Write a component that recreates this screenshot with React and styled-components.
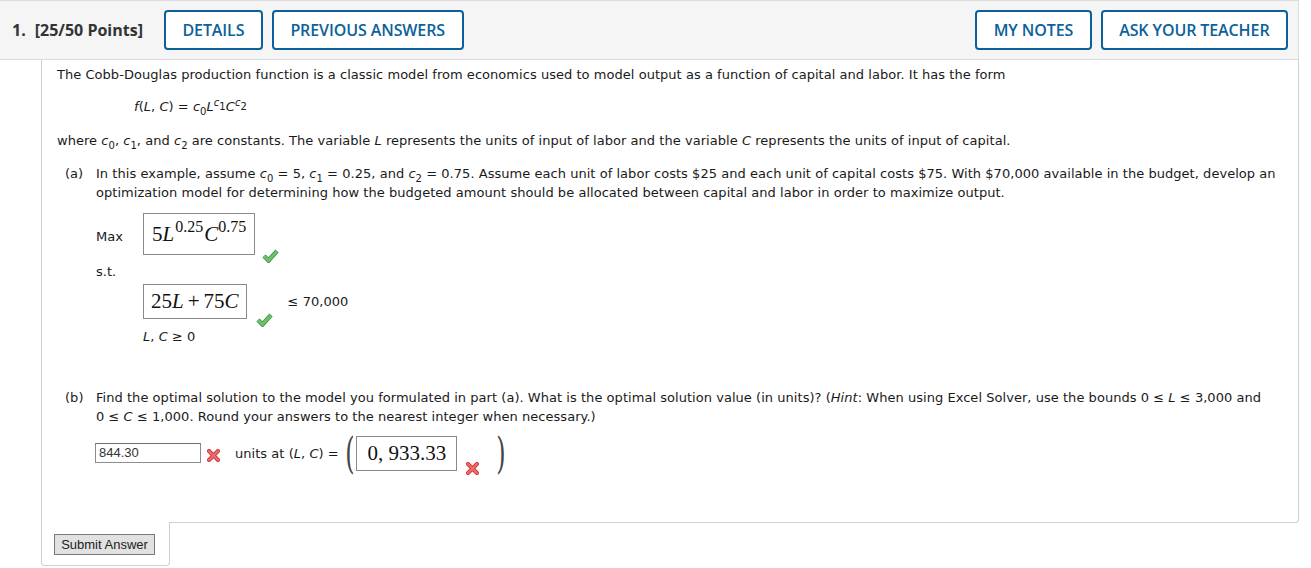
import React from "react";
import styled, { createGlobalStyle } from "styled-components";

const Global = createGlobalStyle`
  html, body { margin: 0; padding: 0; background: #fff; }
  body { width: 1311px; height: 568px; overflow: hidden; }
`;

const Page = styled.div`
  width: 1311px;
  font-family: "DejaVu Sans", Verdana, sans-serif;
  font-size: 13px;
  letter-spacing: 0.04px;
  color: #1a1a1a;
`;

const Header = styled.header`
  box-sizing: border-box;
  width: 1299px;
  height: 60px;
  background: #f5f5f5;
  border-top: 1px solid #dcdcdc;
  border-right: 1px solid #dcdcdc;
  border-bottom: 1px solid #dcdcdc;
  display: flex;
  align-items: center;
  padding: 0 10px 1px 12px;
  font-family: "Open Sans", sans-serif;
  letter-spacing: 0;
`;

const QNum = styled.span`
  font-weight: 700;
  font-size: 16px;
  color: #333;
  margin-right: 9px;
`;

const Points = styled.span`
  font-weight: 700;
  font-size: 16px;
  color: #333;
  margin-right: 21px;
`;

const HeadButton = styled.button`
  box-sizing: border-box;
  height: 40px;
  padding: 0 16.5px;
  margin-left: ${(p) => (p.$push ? "auto" : "0")};
  margin-right: 9px;
  background: #fff;
  border: 2px solid #0b619a;
  border-radius: 4px;
  color: #0b619a;
  font-family: "Open Sans", sans-serif;
  font-weight: 600;
  font-size: 16px;
  letter-spacing: -0.1px;
  cursor: pointer;
  &:last-child { margin-right: 0; }
`;

const Panel = styled.section`
  margin-left: 41px;
  width: 1258px;
  box-sizing: border-box;
`;

const Body = styled.div`
  box-sizing: border-box;
  height: 463px;
  border-left: 1px solid #cfcfcf;
  border-right: 1px solid #cfcfcf;
  border-bottom: 1px solid #cfcfcf;
  border-bottom-right-radius: 4px;
  padding: 5px 15px 0 15px;
`;

const Tab = styled.div`
  position: relative;
  box-sizing: border-box;
  width: 129px;
  height: 44px;
  margin-top: -1px;
  background: #fff;
  border-left: 1px solid #cfcfcf;
  border-right: 1px solid #cfcfcf;
  border-bottom: 1px solid #cfcfcf;
  border-radius: 0 0 4px 4px;
  padding: 12px 0 0 12px;
`;

const Para = styled.p`
  margin: ${(p) => p.$mt || 0}px 0 0 ${(p) => p.$ml || 0}px;
  line-height: 19px;
`;

const I = styled.i`
  font-style: italic;
`;

const NoWrap = styled.span`
  white-space: nowrap;
`;

const Sub = styled.sub`
  font-size: 10px;
  line-height: 0;
  vertical-align: -4px;
`;

const Sup = styled.sup`
  font-size: 10px;
  line-height: 0;
  vertical-align: 5px;
`;

const SupSub = styled.span`
  font-size: 10px;
  vertical-align: -4px;
`;

const Part = styled.div`
  display: grid;
  grid-template-columns: 31px 1fr;
  margin-top: ${(p) => p.$mt || 0}px;
  padding-left: 8px;
  line-height: 19px;
`;

const PartLabel = styled.span``;

const PartBody = styled.div``;

const ModelRow = styled.div`
  display: flex;
  align-items: ${(p) => p.$align || "center"};
  margin-top: ${(p) => p.$mt || 0}px;
  margin-left: ${(p) => p.$ml || 0}px;
  line-height: 19px;
`;

const RowLabel = styled.span`
  width: 47px;
  padding-top: ${(p) => p.$pt || 0}px;
`;

const MathBox = styled.div`
  box-sizing: border-box;
  height: ${(p) => p.$h}px;
  border: 1px solid #8a8a8a;
  padding: 0 ${(p) => p.$px || 8}px;
  display: flex;
  align-items: center;
  font-family: "Liberation Serif", "DejaVu Serif", serif;
  font-size: 21px;
  letter-spacing: 0;
  color: #111;
  white-space: nowrap;
`;

const MI = styled.span`
  font-style: italic;
  margin-right: ${(p) => p.$mr || 0}px;
`;

const MSup = styled.span`
  font-size: 16px;
  position: relative;
  top: -8px;
  margin-right: ${(p) => p.$mr || 0}px;
`;

const Op = styled.span`
  margin: 0 4px;
`;

const Mark = styled.span`
  display: inline-flex;
  align-self: flex-end;
  margin: 0 0 ${(p) => p.$mb || 0}px ${(p) => p.$ml || 0}px;
`;

const Constraint = styled.span`
  margin-left: ${(p) => p.$ml || 0}px;
`;

const AnswerRow = styled.div`
  display: flex;
  align-items: center;
  margin-top: 8px;
  margin-left: -1px;
  height: 38px;
`;

const NumInput = styled.div`
  box-sizing: border-box;
  width: 106px;
  height: 20px;
  border: 1px solid #8d8d8d;
  border-top-color: #6f6f6f;
  padding: 1px 3px;
  font-family: "Liberation Sans", Arial, sans-serif;
  font-size: 13px;
  letter-spacing: 0;
  line-height: 16px;
  color: #333;
`;

const Paren = styled.span`
  font-family: "DejaVu Serif", serif;
  font-weight: 300;
  font-size: 40px;
  line-height: 38px;
  color: #444;
  transform: scaleX(0.6) scaleY(1.05);
  display: inline-block;
  margin: 0 ${(p) => p.$mr || 0}px 0 ${(p) => p.$ml || 0}px;
`;

const SubmitButton = styled.button`
  box-sizing: border-box;
  height: 21px;
  width: 101px;
  padding: 0;
  background: #e1e1e1;
  border: 1px solid #7a7a7a;
  font-family: "Liberation Sans", Arial, sans-serif;
  font-size: 13px;
  color: #222;
`;

const Check = () => (
  <svg width="17" height="15" viewBox="0 0 17 15">
    <path d="M2 8 L6.5 12.5 L15 3" fill="none" stroke="#3f8f3f" strokeWidth="4.4" strokeLinejoin="miter" />
    <path d="M2 8 L6.5 12.5 L15 3" fill="none" stroke="#6fc06f" strokeWidth="2.8" strokeLinejoin="miter" />
  </svg>
);

const Cross = () => (
  <svg width="13" height="13" viewBox="0 0 13 13">
    <path d="M2 2 L11 11 M11 2 L2 11" stroke="#c93838" strokeWidth="4" strokeLinecap="round" />
    <path d="M2 2 L11 11 M11 2 L2 11" stroke="#ef6b6b" strokeWidth="2.4" strokeLinecap="round" />
  </svg>
);

export default function App() {
  return (
    <Page>
      <Global />
      <Header>
        <QNum>1.</QNum>
        <Points>[25/50 Points]</Points>
        <HeadButton>DETAILS</HeadButton>
        <HeadButton>PREVIOUS ANSWERS</HeadButton>
        <HeadButton $push>MY NOTES</HeadButton>
        <HeadButton>ASK YOUR TEACHER</HeadButton>
      </Header>
      <Panel>
        <Body>
          <Para>
            The Cobb-Douglas production function is a classic model from economics used to model output as a function of capital and labor. It has the form
          </Para>
          <Para $mt={13} $ml={77}>
            <I>f</I>(<I>L</I>, <I>C</I>) = <I>c</I><Sub>0</Sub><I>L</I><Sup><I>c</I><SupSub>1</SupSub></Sup><I>C</I><Sup><I>c</I><SupSub>2</SupSub></Sup>
          </Para>
          <Para $mt={15}>
            where <I>c</I><Sub>0</Sub>, <I>c</I><Sub>1</Sub>, and <I>c</I><Sub>2</Sub> are constants. The variable <I>L</I> represents the units of input of labor and the variable <I>C</I> represents the units of input of capital.
          </Para>
          <Part $mt={14}>
            <PartLabel>(a)</PartLabel>
            <PartBody>
              In this example, assume <I>c</I><Sub>0</Sub> = 5, <I>c</I><Sub>1</Sub> = 0.25, and <I>c</I><Sub>2</Sub> = 0.75. Assume each unit of labor costs $25 and each unit of capital costs $75. With $70,000 available in the budget, develop an optimization model for determining how the budgeted amount should be allocated between capital and labor in order to maximize output.
              <ModelRow $mt={11} $align="stretch">
                <RowLabel $pt={14}>Max</RowLabel>
                <MathBox $h={42} $px={8}>
                  5<MI $mr={1}>L</MI><MSup $mr={1}>0.25</MSup><MI>C</MI><MSup>0.75</MSup>
                </MathBox>
                <Mark $ml={7} $mb={-8}><Check /></Mark>
              </ModelRow>
              <ModelRow $mt={7}>s.t.</ModelRow>
              <ModelRow $mt={3} $ml={47}>
                <MathBox $h={35} $px={7}>
                  25<MI>L</MI><Op>+</Op>75<MI>C</MI>
                </MathBox>
                <Mark $ml={9} $mb={-8}><Check /></Mark>
                <Constraint $ml={15}>≤ 70,000</Constraint>
              </ModelRow>
              <ModelRow $mt={8} $ml={47}>
                <span><I>L</I>, <I>C</I> ≥ 0</span>
              </ModelRow>
            </PartBody>
          </Part>
          <Part $mt={42}>
            <PartLabel>(b)</PartLabel>
            <PartBody>
              Find the optimal solution to the model you formulated in part (a). What is the optimal solution value (in units)? (<I>Hint</I>: When using Excel Solver, use the bounds <NoWrap>0 ≤ <I>L</I> ≤ 3,000</NoWrap> and <NoWrap>0 ≤ <I>C</I> ≤ 1,000</NoWrap>. Round your answers to the nearest integer when necessary.)
              <AnswerRow>
                <NumInput>844.30</NumInput>
                <Mark $ml={6} $mb={10}><Cross /></Mark>
                <Constraint $ml={15}>units at (<I>L</I>, <I>C</I>) =</Constraint>
                <Paren $ml={3} $mr={-1}>(</Paren>
                <MathBox $h={35} $px={10}>0, 933.33</MathBox>
                <Mark $ml={9} $mb={-3}><Cross /></Mark>
                <Paren $ml={14}>)</Paren>
              </AnswerRow>
            </PartBody>
          </Part>
        </Body>
        <Tab>
          <SubmitButton>Submit Answer</SubmitButton>
        </Tab>
      </Panel>
    </Page>
  );
}
